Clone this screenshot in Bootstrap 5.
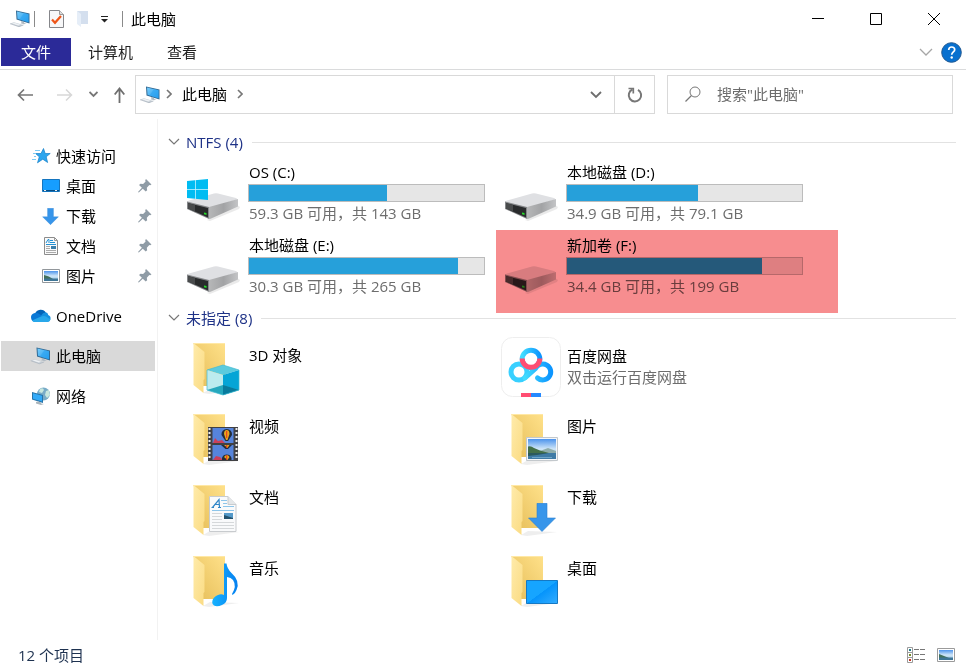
<!DOCTYPE html>
<html lang="zh-CN">
<head>
<meta charset="utf-8">
<meta name="viewport" content="width=device-width, initial-scale=1">
<title>此电脑</title>
<link href="https://cdn.jsdelivr.net/npm/bootstrap@5.3.0/dist/css/bootstrap.min.css" rel="stylesheet">
<style>
body { font-family: "Open Sans", "Noto Sans CJK SC", sans-serif; font-size: 15px; line-height: 20px; color: #000; background: #fff; }
a { color: inherit; text-decoration: none; }
svg { display: block; flex: none; }
.plain { border: 0; background: none; padding: 0; color: inherit; display: flex; align-items: center; justify-content: center; }
.titlebar { height: 38px; padding: 0 3px 0 10px; }
.quick { gap: 11px; padding: 0 13px; }
.title-rule { width: 1px; height: 16px; background: #8a8a8a; }
.win-btn { width: 58px; height: 38px; }
.ribbon { height: 32px; padding: 0 4px 3px 1px; border-bottom: 1px solid #dadbdc; }
.ribbon-tab { height: 28px; padding: 0 17px; color: #222; }
.ribbon-file { width: 70px; background: #2b2a98; color: #fff; }
.toolbar-row { padding: 5px 13px 5px 0; gap: 12px; }
.history { width: 123px; padding-left: 17px; }
.box { height: 39px; border: 1px solid #d9d9d9; min-width: 0; }
.address { flex: 1 1 520px; padding-left: 4px; }
.crumb { gap: 10px; padding: 0 0 2px 6px; }
.search { flex: 0 1 286px; }
.search input { border: 0; outline: 0; background: none; min-width: 0; font-size: 15px; padding: 0 0 2px; }
.search input::placeholder { color: #6d6d6d; opacity: 1; }
.refresh { width: 40px; border-left: 1px solid #d9d9d9; }
.side { width: 158px; padding: 22px 2px 0 1px; border-right: 1px solid #f2f2f2; }
.side-link { display: flex; align-items: center; height: 30px; gap: 5px; padding-left: 29px; }
.side-link.nested { padding: 0 3px 0 39px; }
.side-link.apart { margin-top: 10px; }
.side-link.current { background: #d9d9d9; }
.main { padding: 13px 10px 0 10px; min-width: 0; }
.group-head { display: flex; align-items: center; gap: 6px; height: 20px; color: #1e3287; font-size: 15px; margin: 0; font-weight: 400; }
.group-head::after { content: ""; flex: 1; height: 1px; margin-left: 3px; background: #e2e2e2; }
.tiles { display: grid; grid-template-columns: repeat(auto-fill, 318px); padding-left: 10px; }
.drives { margin: 5px 0; }
.places { margin-top: 4px; }
.tile { display: flex; gap: 5px; padding-left: 5px; position: relative; }
.drive { height: 73px; padding-top: 5px; }
.drive svg { margin-top: 3px; }
.place { height: 71px; padding-top: 5px; }
.place .words { padding-top: 8px; }
.place .words.two-line { padding-top: 9px; }
.two-line .muted { padding-top: 1px; }
.words { width: 237px; }
.words > div:not(.progress) { padding-left: 1px; white-space: nowrap; }
.muted { color: #6d6d6d; }
.progress { height: 18px; margin: 2px 0 1px; border: 1px solid #bcbcbc; border-radius: 0; background: #e6e6e6; }
.progress-bar { background: #26a0da; }
.marked::after { content: ""; position: absolute; left: 0; top: 0; width: 342px; height: 83px; background: #f78d8f; mix-blend-mode: multiply; }
.status { height: 31px; padding: 0 11px 2px 18px; color: #1e3250; }
</style>
</head>
<body class="vh-100 d-flex flex-column overflow-hidden">
<svg width="0" height="0" class="position-absolute" aria-hidden="true">
  <defs>
    <linearGradient id="gBack" x1="0" y1="1" x2="1" y2="0"><stop offset="0" stop-color="#e5bd58"/><stop offset="1" stop-color="#ffe18a"/></linearGradient>
    <linearGradient id="gFlap" x1="0" y1="0" x2="1" y2="1"><stop offset="0" stop-color="#ffebaa"/><stop offset="1" stop-color="#fadb83"/></linearGradient>
    <linearGradient id="gSide" x1="0" y1="0" x2="1" y2="0"><stop offset="0" stop-color="#b6b7b8"/><stop offset=".5" stop-color="#a2a3a5"/><stop offset="1" stop-color="#c3c4c6"/></linearGradient>
    <linearGradient id="gSky" x1="0" y1="0" x2="0" y2="1"><stop offset="0" stop-color="#4c93ec"/><stop offset=".5" stop-color="#d0e6f8"/><stop offset="1" stop-color="#8bbce0"/></linearGradient>
    <linearGradient id="gNote" x1="0" y1="0" x2="1" y2="0"><stop offset="0" stop-color="#16b2ff"/><stop offset="1" stop-color="#0580f0"/></linearGradient>
    <linearGradient id="gPan" x1="0" y1="0" x2="1" y2="0"><stop offset="0" stop-color="#42dcff"/><stop offset="1" stop-color="#0c95ff"/></linearGradient>
    <linearGradient id="gScreen" x1="0" y1="0" x2="1" y2="1"><stop offset="0" stop-color="#78cdfb"/><stop offset="1" stop-color="#1e97ec"/></linearGradient>
    <linearGradient id="gDesk" x1="0" y1="0" x2="1" y2="1"><stop offset=".5" stop-color="#16a5ff"/><stop offset=".51" stop-color="#0594fb"/><stop offset="1" stop-color="#35adff"/></linearGradient>
  </defs>
  <symbol id="pc" viewBox="0 0 20 18">
    <path d="m0 13.500 4-1.300 9.500 2.800-4.500 1.900z" fill="#c9d1d8"/><path d="m2 13.500 2.500-.7 6 1.900-2.500.8z" fill="#eef1f4"/><path d="m0 13.700 9 3 4.500-1.700" fill="none" stroke="#a4aeb8" stroke-width=".6"/>
    <path d="m11 11 3 .9.300 1.200 2 .5-2.300.7-3.500-1.100 1-.7z" fill="#b2bbc3"/>
    <path d="m6 .5 13.500 3v10L6.500 9.500z" fill="#326a94"/><path d="m7 1.500 11.500 2.700v8L7.500 8.800z" fill="url(#gScreen)"/>
    <path d="m14 3.100 4.500 1.100v8L9.500 9.400z" fill="#2ba4f2" opacity=".6"/>
  </symbol>
  <symbol id="driveShape" viewBox="0 0 60 60">
    <path d="m24 55 3 1 29-12 1-2-3-2z" fill="#bbb" opacity=".3"/>
    <path d="M4 37Q4 36 6 35.500L31 28.500q2-.5 4 0l18 4.500q1.500.5 1 1.500L26 43z" fill="#dfe0e3"/>
    <path d="m26 42 29-8v7.500L27 54h-1z" fill="url(#gSide)"/><path d="m4 36.500 22 5.500v12L4 44z" fill="#85878a"/>
    <path d="m5 38 20 5v9.500L5 43.500z" fill="#292b2c"/><path d="m5 38 7 2v6.500l-7-3z" fill="#494b4c"/><path d="m21 47.500 2.500.4V50l-2.500-.7z" fill="#25dc29"/>
  </symbol>
  <symbol id="folder" viewBox="0 0 60 60">
    <path d="m20 56 7-4 29 1-30 4z" fill="#aaa" opacity=".2"/>
    <path d="M10.500 6H42v43H20z" fill="url(#gBack)"/><path d="M10.500 6 21.500 15v27l-1 1v13l-10-8z" fill="url(#gFlap)"/><path d="M10.500 6.500H42" stroke="#ffe8a5"/>
  </symbol>
  <symbol id="photo" viewBox="0 0 32 24">
    <path d="M.5.5h31v23H.5z" fill="#f4f6f8" stroke="#c3c8cc"/><path d="M2 2h28v20H2z" fill="url(#gSky)"/>
    <path d="m14 14 8-3 8 3v2H14z" fill="#8fadab"/><path d="M2 9.500q3-1 6 1.500l6 2.500 9 2.500H2z" fill="#447049"/><path d="M2 16h28v6H2z" fill="#3f7ba6"/><path d="M2 16h21l-12 2-9 1z" fill="#2c5a5d"/><path d="M6 20.500h20" stroke="#83b8d7" stroke-width=".7"/>
  </symbol>
  <symbol id="deskShape" viewBox="0 0 32 24"><path d="M.5.5h31v23H.5z" fill="url(#gDesk)" stroke="#1579c4"/></symbol>
  <symbol id="pin" viewBox="0 0 14 14"><path d="m8 0 5.500 5.500-1.300.8-.9-.2-2.500 2.600.4 2.500-1.500 1.400-2.900-2.900L.8 13.600 0 13l3.900-4.200L1 6l1.500-1.300 2.600.4 2.500-2.500-.4-1.300z" fill="#8f9ca6"/></symbol>
  <symbol id="down" viewBox="0 0 28 29"><path d="M9 .3h10V15h8.500L14 28.500.5 15H9z" fill="#3795ea" stroke="#2b80d0" stroke-width=".6"/></symbol>
</svg>

<header>
  <div class="titlebar d-flex align-items-center">
    <svg width="20" height="18"><use href="#pc"/></svg>
    <span class="title-rule ms-1"></span>
    <div class="quick d-flex align-items-center">
      <button class="plain" aria-label="属性"><svg width="17" height="18" viewBox="-1 0 17 18"><path d="M.5.500h10l4 4v13H.5z" fill="#f7f7f8" stroke="#85868a"/><path d="M10.500.5v4h4" fill="#ddd" stroke="#999"/><path d="m3 9.500 3 3.300L12 6" fill="none" stroke="#ee5518" stroke-width="2.200"/></svg></button>
      <button class="plain" aria-label="新建文件夹"><svg width="13" height="18" viewBox="0 0 13 18"><path d="M1 1h11v13H5z" fill="#d4dfee"/><path d="m1 1 4 3v13l-4-3z" fill="#e6eef8"/></svg></button>
      <button class="plain" aria-label="自定义快速访问工具栏"><svg width="9" height="8" viewBox="0 0 9 8"><path d="M1 1.500h7" stroke="#222"/><path d="M1 4h7L4.500 7.500z" fill="#222"/></svg></button>
    </div>
    <span class="title-rule me-2"></span>
    <span>此电脑</span>
    <div class="ms-auto d-flex">
      <button class="plain win-btn" aria-label="最小化"><svg width="12" height="12"><path d="M0 5.500h12" stroke="#000"/></svg></button>
      <button class="plain win-btn" aria-label="最大化"><svg width="12" height="12"><path d="M.5.500h11v11H.5z" fill="none" stroke="#000"/></svg></button>
      <button class="plain win-btn" aria-label="关闭"><svg width="12" height="12"><path d="m0 0 12 12M12 0 0 12" stroke="#000"/></svg></button>
    </div>
  </div>
  <div class="ribbon d-flex align-items-center">
    <button class="plain ribbon-tab ribbon-file">文件</button>
    <button class="plain ribbon-tab">计算机</button>
    <button class="plain ribbon-tab">查看</button>
    <button class="plain ms-auto me-2" aria-label="展开功能区"><svg width="14" height="8"><path d="m1 1 6 6 6-6" fill="none" stroke="#a6a6a6" stroke-width="1.300"/></svg></button>
    <button class="plain" aria-label="帮助"><svg width="21" height="21" viewBox="0 0 21 21"><circle cx="10.500" cy="10.500" r="9.800" fill="#0870cf" stroke="#245a91"/><path d="M7.700 8q0-3 3-3t3 2.700c0 2.200-3 2.300-3 5.100" fill="none" stroke="#fff" stroke-width="1.700"/><circle cx="10.700" cy="15.500" r="1.200" fill="#fff"/></svg></button>
  </div>
  <div class="toolbar-row d-flex">
    <div class="history d-flex align-items-center">
      <button class="plain" aria-label="后退"><svg width="16" height="14" viewBox="0 0 16 14"><path d="M16 7H1.500M7 1.500 1.500 7 7 12.500" fill="none" stroke="#767676" stroke-width="1.700"/></svg></button>
      <button class="plain ms-4" aria-label="前进"><svg width="16" height="14" viewBox="0 0 16 14"><path d="M0 7h14.500M9 1.500 14.500 7 9 12.500" fill="none" stroke="#d7d7d7" stroke-width="1.500"/></svg></button>
      <button class="plain ms-3" aria-label="最近浏览的位置"><svg width="9" height="7"><path d="m.5 1 4 4 4-4" fill="none" stroke="#777" stroke-width="1.800"/></svg></button>
      <button class="plain ms-3" aria-label="上移"><svg width="11" height="16" viewBox="0 0 11 16"><path d="M5.500 16V1.500M.7 7.500l4.800-6 4.800 6" fill="none" stroke="#6f6f6f" stroke-width="1.800"/></svg></button>
    </div>
    <div class="box address d-flex align-items-center">
      <svg width="20" height="18"><use href="#pc"/></svg>
      <div class="crumb d-flex align-items-center">
        <svg width="6" height="10"><path d="m1 1 4 4-4 4" fill="none" stroke="#777" stroke-width="1.600"/></svg>
        <a href="#">此电脑</a>
        <svg width="6" height="10"><path d="m1 1 4 4-4 4" fill="none" stroke="#777" stroke-width="1.600"/></svg>
      </div>
      <button class="plain ms-auto me-2 pe-1" aria-label="历史地址"><svg width="12" height="8"><path d="m1 1 5 5 5-5" fill="none" stroke="#6e6e6e" stroke-width="1.800"/></svg></button>
      <button class="plain refresh h-100" aria-label="刷新"><svg width="16" height="16" viewBox="0 0 16 16"><path d="M11 2.800a6.200 6.200 0 1 1-5.500-.3" fill="none" stroke="#777" stroke-width="2"/><path d="M1.500 1.500h4.800v5" fill="none" stroke="#777" stroke-width="1.700"/></svg></button>
    </div>
    <div class="box search d-flex align-items-center">
      <svg width="17" height="17" viewBox="0 0 17 17" class="ms-3"><circle cx="11" cy="6" r="5" fill="none" stroke="#777"/><path d="m7.500 9.500-6 6" stroke="#777" stroke-width="1.300"/></svg>
      <input type="text" class="flex-grow-1 ms-3" placeholder="搜索&quot;此电脑&quot;" aria-label="搜索此电脑">
    </div>
  </div>
</header>

<div class="d-flex flex-grow-1 overflow-hidden">
  <nav class="side flex-shrink-0">
    <a href="#" class="side-link"><svg width="21" height="20" viewBox="0 0 21 20"><path d="m13.500 2.500 1.700 5h5l-4 3.300 1.400 5.700-4.800-3.300-5.300 3.600 1.800-6-3.800-3.300H11z" fill="#2da5ee" stroke="#147fc9" stroke-width=".7"/><path d="M5 4.500h5M3 7.500h3M4 10.500h2M2 13.500h4" stroke="#7fcaf3"/></svg>快速访问</a>
    <a href="#" class="side-link nested"><svg width="21" height="18" viewBox="0 0 21 18"><path d="M2.500 2.500h17v12h-17z" fill="#169eff" stroke="#1475bf"/><path d="M3 13.500h16" stroke="#084d83"/><path d="M4 13.500h2m9 0h2" stroke="#eee"/></svg>桌面<svg class="ms-auto" width="14" height="14"><use href="#pin"/></svg></a>
    <a href="#" class="side-link nested"><svg width="21" height="17"><use href="#down"/></svg>下载<svg class="ms-auto" width="14" height="14"><use href="#pin"/></svg></a>
    <a href="#" class="side-link nested"><svg width="21" height="18" viewBox="0 0 21 18"><path d="M4.500.500h10l3 3v14h-13z" fill="#fafafa" stroke="#8c8c8c"/><path d="M14.500.5v3h3" fill="none" stroke="#999"/><path d="m6 6 2-3.500h1V6M10 3.500h3M10 5.500h5M6 7.500h10" fill="none" stroke="#2492d5"/><path d="M6 9.500h4m-4 2h4m-4 2h10m-10 2h10" stroke="#aaa"/><path d="M11 9h5v3h-5z" fill="#3b7fab"/></svg>文档<svg class="ms-auto" width="14" height="14"><use href="#pin"/></svg></a>
    <a href="#" class="side-link nested"><svg width="21" height="14" viewBox="0 0 21 14"><path d="M2.500.500h17v13h-17z" fill="#fff" stroke="#92979b"/><path d="M4 2h14v10H4z" fill="url(#gSky)"/><path d="M4 6q5 1 9 4H4z" fill="#42705b"/><path d="M4 9.500h14V12H4z" fill="#3e7596"/></svg>图片<svg class="ms-auto" width="14" height="14"><use href="#pin"/></svg></a>
    <a href="#" class="side-link apart"><svg width="21" height="16" viewBox="0 0 21 16"><path d="M5 6a6 6 0 0 1 11-1l-3 6z" fill="#0364b8"/><path d="M5 14a4.500 4.500 0 0 1-1-8.700Q7 4 10 6.500l5 3.500-9 4z" fill="#0a79d6"/><path d="M11 8q2-4 6-3.300 1 1 1.200 2.300Q21 8 20.500 11q-.5 3-4 3z" fill="#1590df"/><path d="m2 12.500 9-4q3-1 5 0l4.500 3q-.8 2.500-4 2.500H5q-2 0-3-1.500z" fill="#28a8ea"/></svg>OneDrive</a>
    <a href="#" class="side-link apart current" aria-current="page"><svg width="21" height="18" viewBox="0 0 20 18"><use href="#pc"/></svg>此电脑</a>
    <a href="#" class="side-link apart"><svg width="21" height="19" viewBox="0 0 21 19"><circle cx="13.500" cy="7" r="6.500" fill="#78abc7"/><path d="M10 2q3-2 4 1l-2 3-3-1zm6 2 3-1 1 5-3 3-2-3z" fill="#c8e7df"/><path d="m2 5 11 3v8L2 12.500z" fill="#2674a9"/><path d="m3 6.200 9 2.500v5.800l-9-2.700z" fill="#32aaf8"/><path d="m6 15 2-.6 3 1.200v1l3 .5-3 1-5-1.500z" fill="#aab5bc"/></svg>网络</a>
  </nav>

  <main class="main flex-grow-1">
    <h2 class="group-head"><svg width="12" height="8"><path d="m1 1 5 5 5-5" fill="none" stroke="#777" stroke-width="1.200"/></svg>NTFS (4)</h2>
    <div class="tiles drives">
      <a href="#" class="tile drive"><svg width="60" height="60" viewBox="0 0 60 60"><use href="#driveShape"/><path d="m4 16 21-2v21L4 33z" fill="#00bcf2"/><path d="M12.500 15v19M4 24.500h21" stroke="#c5f3ff" stroke-width=".8"/></svg>
        <div class="words"><div>OS (C:)</div><div class="progress"><div class="progress-bar" style="width:58.7%"></div></div><div class="muted">59.3 GB 可用，共 143 GB</div></div></a>
      <a href="#" class="tile drive"><svg width="60" height="60"><use href="#driveShape"/></svg>
        <div class="words"><div>本地磁盘 (D:)</div><div class="progress"><div class="progress-bar" style="width:55.8%"></div></div><div class="muted">34.9 GB 可用，共 79.1 GB</div></div></a>
      <a href="#" class="tile drive"><svg width="60" height="60"><use href="#driveShape"/></svg>
        <div class="words"><div>本地磁盘 (E:)</div><div class="progress"><div class="progress-bar" style="width:88.8%"></div></div><div class="muted">30.3 GB 可用，共 265 GB</div></div></a>
      <a href="#" class="tile drive marked"><svg width="60" height="60"><use href="#driveShape"/></svg>
        <div class="words"><div>新加卷 (F:)</div><div class="progress"><div class="progress-bar" style="width:83%"></div></div><div class="muted">34.4 GB 可用，共 199 GB</div></div></a>
    </div>

    <h2 class="group-head"><svg width="12" height="8"><path d="m1 1 5 5 5-5" fill="none" stroke="#777" stroke-width="1.200"/></svg>未指定 (8)</h2>
    <div class="tiles places">
      <a href="#" class="tile place"><svg width="60" height="60" viewBox="0 0 60 60"><use href="#folder"/><path d="m24 33 16-5 16 5-16 5z" fill="#5bcadd"/><path d="m24 33 16 5v20l-16-5z" fill="#bcebee"/><path d="m56 33-16 5v20l16-5z" fill="#05a5d6"/><path d="m24 53 16-5 16 5-16 5z" fill="#26a8bd"/><path d="M40 48v10l16-5z" fill="#087b9d"/><path d="m24 33 16-5 16 5v20l-16 5-16-5z" fill="none" stroke="#42bad1" stroke-width=".7"/></svg><div class="words"><div>3D 对象</div></div></a>
      <a href="#" class="tile place"><svg width="60" height="60" viewBox="0 0 60 60"><rect x=".5" y=".5" width="59" height="59" rx="11" fill="#fff" stroke="#eee"/><g fill="none" stroke-width="5"><circle cx="30" cy="22" r="8.800" stroke="url(#gPan)"/><circle cx="18" cy="35" r="8" stroke="#38d0ff"/><path d="m24 41 10.500-9.500A8 8 0 1 1 36.500 41" stroke="url(#gPan)" stroke-linecap="round"/><path d="M21.200 21.500a8.800 8.800 0 0 0 17.600 0" stroke="#ff4d72"/></g><path d="M20 56h10v4H20z" fill="#ff4d72"/><path d="M30 56h10v4H30z" fill="#2589ff"/></svg><div class="words two-line"><div>百度网盘</div><div class="muted">双击运行百度网盘</div></div></a>
      <a href="#" class="tile place"><svg width="60" height="60" viewBox="0 0 60 60"><use href="#folder"/><path d="M25 19h30v34H25z" fill="#414144"/><path d="M26.500 20v32M53.500 20v32" stroke="#eee" stroke-width="2" stroke-dasharray="2 2"/><path d="M29.500 20h21v15h-21zm0 17h21v15h-21z" fill="#5684dc"/><path d="m30 35 2-5 3 3 4-1 3 3zm0 17 3-4 4 1 3 3z" fill="#ca405b"/><path d="M38.500 27a5.300 5.300 0 1 1 10.500 0l-4 6h-2.500zM39 50a5 5 0 0 1 9.500 0v2H39zM38 37h11l-4 4h-2.500z" fill="#222d3c"/><path d="M41 26a2.700 4 0 0 1 5.500 0l-2 6h-1.500zm0 23q3-4 5.500 0l-2 3zm0-12h5.500l-2 3z" fill="#eaa51c"/><path d="M43.700 23v7m0 17v5m0-15v3" stroke="#e43424"/></svg><div class="words"><div>视频</div></div></a>
      <a href="#" class="tile place"><svg width="60" height="60" viewBox="0 0 60 60"><use href="#folder"/><use href="#photo" x="25" y="29" width="32" height="24"/></svg><div class="words"><div>图片</div></div></a>
      <a href="#" class="tile place"><svg width="60" height="60" viewBox="0 0 60 60"><use href="#folder"/><path d="M26.500 17.500H45l8 8v27H26.500z" fill="#f9fafb" stroke="#c8cbce"/><path d="M45 17.500v8h8" fill="#e4e7e9" stroke="#c8cbce"/><path d="m29.500 28.500 6.500-8 .5 8M32 25.500h4.500M28.500 28.500h2.500m4 0h3" fill="none" stroke="#2f86c8" stroke-width="1.200"/><path d="M38 21.500h6m-4 3h4m-4 3h11M29 31.500h22" fill="none" stroke="#8cc5ea"/><path d="M29 34.500h10m-10 3h10m-10 3h10m-10 3h22m-22 3h22m-22 3h22" stroke="#d5d8da"/><path d="M41 34h9v6h-9z" fill="#5499c9"/><path d="m41 36 9 3v1h-9z" fill="#24526d"/></svg><div class="words"><div>文档</div></div></a>
      <a href="#" class="tile place"><svg width="60" height="60" viewBox="0 0 60 60"><use href="#folder"/><use href="#down" x="27" y="24" width="28" height="29"/></svg><div class="words"><div>下载</div></div></a>
      <a href="#" class="tile place"><svg width="60" height="60" viewBox="0 0 60 60"><use href="#folder"/><path d="M41 13.500h2.500q.5 5 5 9.500 9 8 5 17-1.500 4-4 5l-.5-1q5-8 1-14-2-2.500-6-3v21q0 5-5 7-5 2.200-8 .5-3-2-1-6.500 2-3.500 6.500-4.500 2.500-.5 4.500.5z" fill="url(#gNote)"/></svg><div class="words"><div>音乐</div></div></a>
      <a href="#" class="tile place"><svg width="60" height="60" viewBox="0 0 60 60"><use href="#folder"/><use href="#deskShape" x="25" y="30" width="32" height="24"/></svg><div class="words"><div>桌面</div></div></a>
    </div>
  </main>
</div>

<footer class="status d-flex align-items-center">
  <span>12 个项目</span>
  <button class="plain ms-auto" aria-label="详细信息"><svg width="18" height="16" viewBox="0 0 18 16"><path d="M.5.500h5v15h-5zM.5 5.500h5m-5 5h5" fill="#fff" stroke="#9b9b9b"/><path d="M2 2h2v2H2z" fill="#237b89"/><path d="M2 7h2v2H2z" fill="#748b29"/><path d="M2 12h2v2H2z" fill="#c43222"/><path d="M7 2.500h5m1 0h5m-11 5h5m1 0h5m-11 5h5m1 0h5" stroke="#777"/></svg></button>
  <button class="plain ms-2 ps-1" aria-label="大图标"><svg width="18" height="14" viewBox="0 0 18 14"><path d="M.5.500h17v13H.5z" fill="#fff" stroke="#9b9b9b"/><path d="M2 2h14v10H2z" fill="url(#gSky)"/><path d="m2 6 10 4H2z" fill="#42705b"/><path d="M2 9.500h14V12H2z" fill="#3e7596"/></svg></button>
</footer>
<script src="https://cdn.jsdelivr.net/npm/bootstrap@5.3.0/dist/js/bootstrap.bundle.min.js"></script>
</body>
</html>
